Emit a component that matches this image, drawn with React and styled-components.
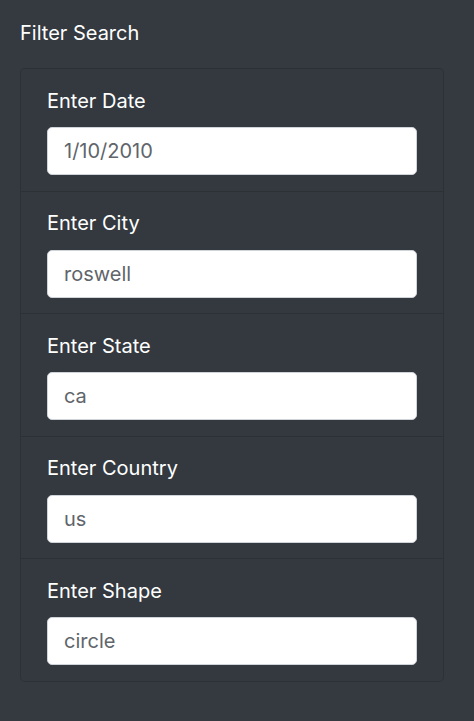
import React from "react";
import styled, { createGlobalStyle } from "styled-components";

const GlobalStyle = createGlobalStyle`
  html, body {
    margin: 0;
    padding: 0;
    background: #343a40;
  }
  body {
    font-family: Inter, "Noto Sans", "Liberation Sans", sans-serif;
  }
`;

const filters = [
  { label: "Enter Date", value: "1/10/2010" },
  { label: "Enter City", value: "roswell" },
  { label: "Enter State", value: "ca" },
  { label: "Enter Country", value: "us" },
  { label: "Enter Shape", value: "circle" },
];

const App = () => {
  return (
    <>
      <GlobalStyle />
      <Panel>
        <Title>Filter Search</Title>
        <FilterList>
          {filters.map((f, index) => (
            <FilterItem key={index}>
              <Label>{f.label}</Label>
              <Input type="text" defaultValue={f.value} />
            </FilterItem>
          ))}
        </FilterList>
      </Panel>
    </>
  );
};

const Panel = styled.div`
  box-sizing: border-box;
  width: 474px;
  min-height: 721px;
  padding: 18px 30px 40px 20px;
  background: #343a40;
  display: flex;
  flex-direction: column;
  gap: 20px;
`;

const Title = styled.h5`
  margin: 0;
  font-size: 20px;
  font-weight: 400;
  line-height: 30px;
  color: #ffffff;
`;

const FilterList = styled.ul`
  list-style: none;
  margin: 0;
  padding: 0;
  display: flex;
  flex-direction: column;
  border: 1px solid rgba(0, 0, 0, 0.13);
  border-radius: 5px;
  background: #33393f;
`;

const FilterItem = styled.li`
  display: flex;
  flex-direction: column;
  gap: 11.5px;
  padding: 16.5px 26px 15.5px 26px;
  border-bottom: 1px solid rgba(0, 0, 0, 0.13);

  &:last-child {
    border-bottom: none;
  }
`;

const Label = styled.label`
  font-size: 20px;
  line-height: 30px;
  color: #ffffff;
`;

const Input = styled.input`
  box-sizing: border-box;
  width: 100%;
  height: 48px;
  padding: 6px 16px;
  font-family: inherit;
  font-size: 20px;
  color: #5f656b;
  background: #ffffff;
  border: 1px solid #ced4da;
  border-radius: 5px;
  outline: none;
`;

export default App;
